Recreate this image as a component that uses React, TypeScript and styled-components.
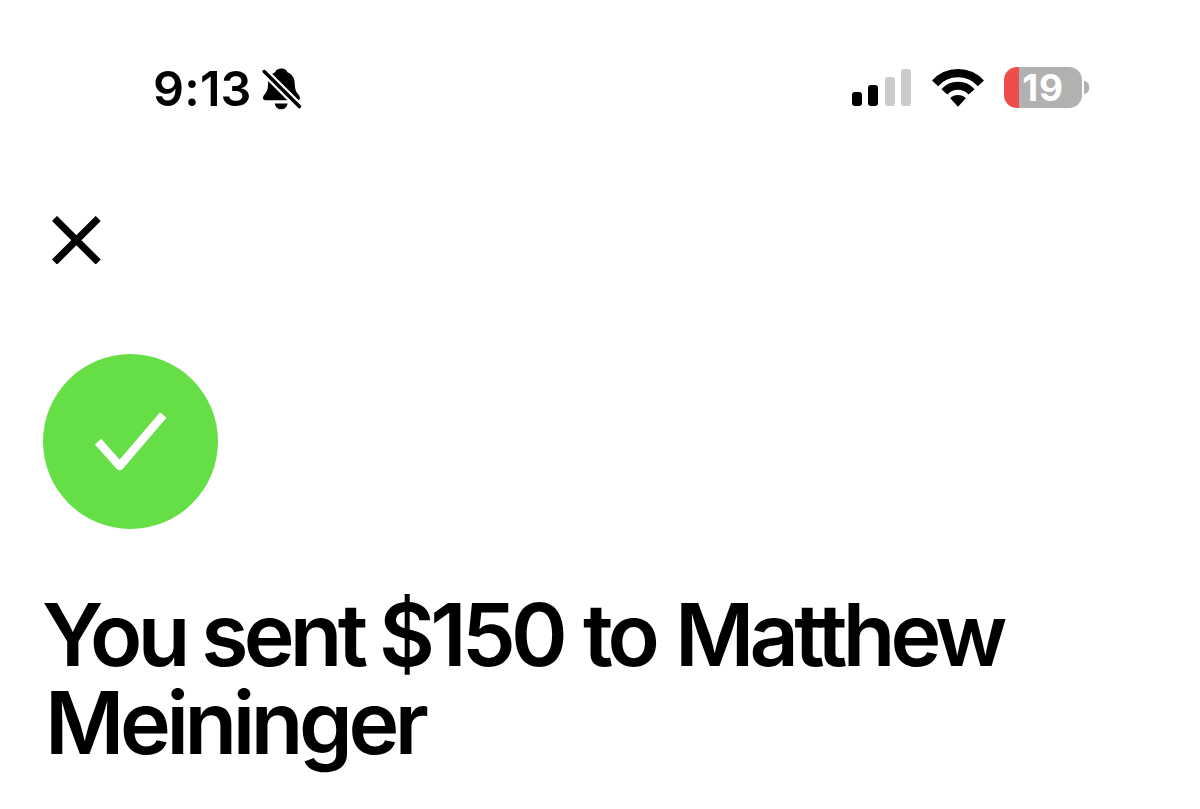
import styled, { createGlobalStyle } from 'styled-components';

const GlobalStyle = createGlobalStyle`
    body {
        margin: 0;
        background: #ffffff;
    }
`;

const Screen = styled.main`
    box-sizing: border-box;
    width: 1200px;
    height: 809px;
    overflow: hidden;
    padding-top: 60px;
    background: #ffffff;
    color: #000000;
    font-family: Inter, 'Liberation Sans', sans-serif;
`;

const StatusBar = styled.header`
    display: flex;
    justify-content: space-between;
    align-items: flex-start;
    height: 58px;
    padding: 0 111px 0 153px;
`;

const StatusGroup = styled.div<{ $gap: number; $height: number }>`
    display: flex;
    align-items: center;
    gap: ${({ $gap }) => $gap}px;
    height: ${({ $height }) => $height}px;
`;

const Time = styled.span`
    width: 97px;
    font-weight: 600;
    font-size: 48.5px;
    line-height: 58px;
    letter-spacing: 0.2px;
    white-space: nowrap;
`;

const SignalBars = styled.div`
    display: flex;
    align-items: flex-end;
    gap: 6.3px;
    height: 38px;
    margin-top: -1px;
`;

const SignalBar = styled.span<{ $height: number; $active?: boolean }>`
    width: 10px;
    height: ${({ $height }) => $height}px;
    border-radius: 3px;
    background: ${({ $active }) => ($active ? '#000000' : '#cbcbcb')};
`;

const Battery = styled.div`
    display: flex;
    align-items: center;
    gap: 2px;
`;

const BatteryBody = styled.div`
    box-sizing: border-box;
    width: 78px;
    height: 41px;
    border-radius: 13px;
    background: linear-gradient(to right, #ee4d49 15px, #b1b1b1 15px);
    color: #ffffff;
    font-weight: 700;
    font-size: 37px;
    line-height: 41px;
    letter-spacing: 0.8px;
    text-align: center;
`;

const BatteryCap = styled.span`
    width: 5px;
    height: 13px;
    border-radius: 0 6px 6px 0;
    background: #b1b1b1;
`;

const Content = styled.section`
    display: flex;
    flex-direction: column;
    align-items: flex-start;
    padding: 98px 43px 0;
`;

const CloseButton = styled.button`
    display: flex;
    margin: 0 0 0 9px;
    padding: 0;
    border: 0;
    background: none;
`;

const SuccessBadge = styled.div`
    display: flex;
    width: 175px;
    height: 175px;
    margin-top: 90px;
    border-radius: 50%;
    background: #66de46;
`;

const Title = styled.h1`
    margin: 63px 0 0 -1px;
    font-weight: 600;
    font-size: 86px;
    line-height: 87.5px;
    letter-spacing: -4.8px;
    word-spacing: -1px;
    white-space: nowrap;
`;

const Recipient = styled.span`
    word-spacing: 3px;
`;

const Surname = styled.span`
    display: block;
    padding-left: 3px;
    letter-spacing: -4.4px;
`;

const MutedBell = () => (
    <svg width="40" height="42" viewBox="0 0 40 42" fill="none">
        <path
            d="M19.300.6c-3.100 0-5.400 1.300-6.100 3.700C8.500 6.300 6.300 9.800 6.100 15c-.2 5.200-.7 8-2.800 10.500C1.800 27.300 1 28.500 1 30c0 1.400.9 2.200 2.400 2.200h31.900c1.600 0 2.600-.8 2.600-2.300 0-1.600-.9-2.700-2.300-4.400-2.100-2.600-2.700-5.200-2.900-10.400C32.500 9.800 30.200 6.300 25.400 4.300 24.700 1.900 22.400.6 19.300.6zM12.800 35.400h12.800c-.6 3.600-3.100 5.900-6.400 5.900s-5.800-2.300-6.400-5.900z"
            fill="#000000"
        />
        <path d="M0 1.400 40 41.200" stroke="#ffffff" strokeWidth="8" />
        <path d="M2.200 3.600 37.400 38.600" stroke="#000000" strokeWidth="3.500" strokeLinecap="round" />
    </svg>
);

const Wifi = () => (
    <svg width="52" height="38" viewBox="0 0 52 38" fill="none">
        <g stroke="#000000">
            <path d="M3.100 14.400a30.800 30.800 0 0 1 45.800 0" strokeWidth="8.300" />
            <path d="M12.400 22.800a18.200 18.200 0 0 1 27.200 0" strokeWidth="7.900" />
        </g>
        <path d="M18.200 29.300a10.800 10.800 0 0 1 15.600 0L26 37.700z" fill="#000000" />
    </svg>
);

const App = () => (
    <Screen>
        <GlobalStyle />
        <StatusBar>
            <StatusGroup $gap={12} $height={58}>
                <Time>9:13</Time>
                <MutedBell />
            </StatusGroup>
            <StatusGroup $gap={20.5} $height={55}>
                <SignalBars>
                    <SignalBar $height={14} $active />
                    <SignalBar $height={21} $active />
                    <SignalBar $height={29} />
                    <SignalBar $height={37} />
                </SignalBars>
                <Wifi />
                <Battery>
                    <BatteryBody>19</BatteryBody>
                    <BatteryCap />
                </Battery>
            </StatusGroup>
        </StatusBar>

        <Content>
            <CloseButton aria-label="Close">
                <svg width="49" height="48" viewBox="0 0 49 48">
                    <path d="M2.500 2.500 46.200 46M46.200 2.500 2.500 46" stroke="#000000" strokeWidth="7.200" />
                </svg>
            </CloseButton>
            <SuccessBadge>
                <svg width="175" height="175" viewBox="0 0 175 175" fill="none">
                    <path
                        d="M55 87.600 76.700 112 120.300 60.900"
                        stroke="#ffffff"
                        strokeWidth="8.400"
                        strokeLinejoin="round"
                    />
                </svg>
            </SuccessBadge>
            <Title>
                You sent $150<Recipient> to Matthew</Recipient>
                <Surname>Meininger</Surname>
            </Title>
        </Content>
    </Screen>
);

export default App;
